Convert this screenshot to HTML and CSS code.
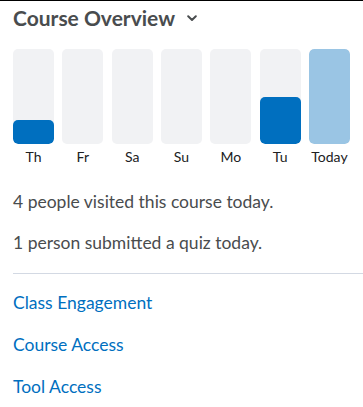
FILE: index.html
```html
<!DOCTYPE html>
<html>
<head>
<meta charset="utf-8">
<link rel="stylesheet" href="styles.css">
</head>
<body>
<div class="widget">
  <h2 class="title">Course Overview <svg class="chev" width="10" height="7" viewBox="0 0 10 7"><path d="M1.2 1.3 L5 5 L8.8 1.3" fill="none" stroke="#494c4e" stroke-width="2" stroke-linecap="round" stroke-linejoin="round"/></svg></h2>
  <div class="chart">
    <div class="col"><div class="bar"><div class="fill" style="height:25%"></div></div><span class="lbl">Th</span></div>
    <div class="col"><div class="bar"></div><span class="lbl">Fr</span></div>
    <div class="col"><div class="bar"></div><span class="lbl">Sa</span></div>
    <div class="col"><div class="bar"></div><span class="lbl">Su</span></div>
    <div class="col"><div class="bar"></div><span class="lbl">Mo</span></div>
    <div class="col"><div class="bar"><div class="fill" style="height:50%"></div></div><span class="lbl">Tu</span></div>
    <div class="col"><div class="bar"><div class="fill today" style="height:100%"></div></div><span class="lbl">Today</span></div>
  </div>
  <p class="stat first">4 people visited this course today.</p>
  <p class="stat">1 person submitted a quiz today.</p>
  <hr class="sep">
  <ul class="links">
    <li><a href="#">Class Engagement</a></li>
    <li><a href="#">Course Access</a></li>
    <li><a href="#">Tool Access</a></li>
  </ul>
</div>
</body>
</html>
```
FILE: styles.css
```css
html, body { margin: 0; padding: 0; background: #fff; }
body { font-family: Lato, "Noto Sans", sans-serif; }
.widget { border-top: 1px solid #000; padding-left: 13px; }
.title {
  margin: 0; padding-top: 3px;
  font-size: 21px; font-weight: 700; color: #494c4e;
  line-height: 28px; display: flex; align-items: center; gap: 12px;
}
.chev { margin-top: 1px; }
.chart { display: flex; gap: 8.33px; margin-top: 17px; width: 337px; }
.col { width: 41px; display: flex; flex-direction: column; align-items: center; }
.bar {
  width: 41px; height: 95px; background: #f1f2f4; border-radius: 5px;
  display: flex; flex-direction: column; justify-content: flex-end; overflow: hidden;
}
.fill { background: #006fbf; border-radius: 5px; }
.fill.today { background: #9ac5e4; }
.lbl { font-size: 14px; color: #202122; line-height: 16px; margin-top: 5px; }
.stat { margin: 19px 0 0 0; font-size: 17.5px; color: #494c4e; line-height: 22px; }
.stat.first { margin-top: 26px; }
.sep { border: 0; border-top: 1px solid #d3d9e3; margin: 19px 0 0 0; }
.links { list-style: none; margin: 0; padding: 0; }
.links li { font-size: 17.5px; line-height: 22px; margin-top: 20px; }
.links li:first-child { margin-top: 18px; }
.links a { color: #006fbf; text-decoration: none; }
```
